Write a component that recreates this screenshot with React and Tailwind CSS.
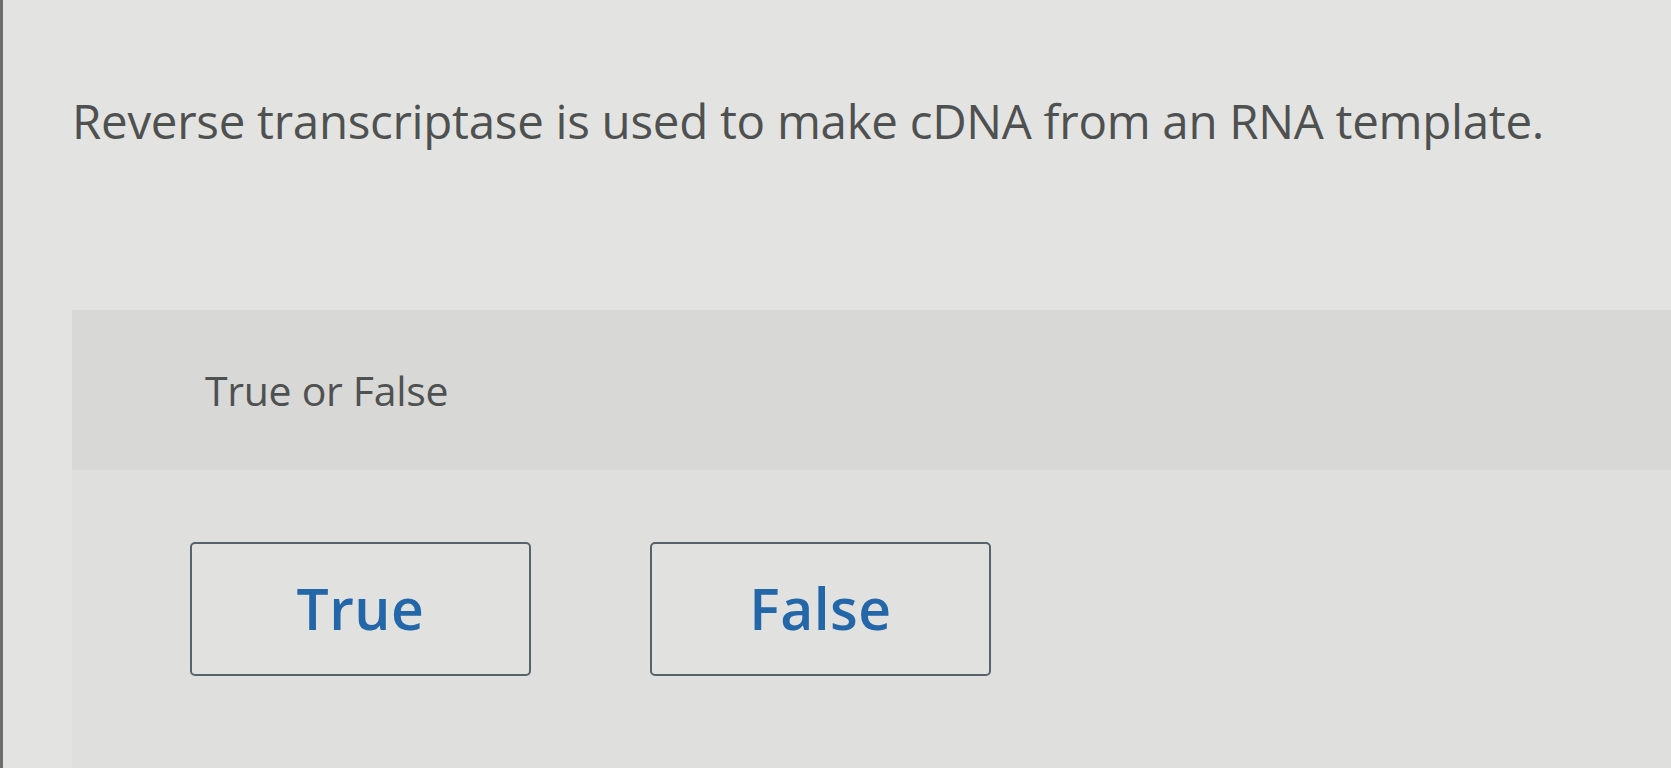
import React from "react";

const choices = ["True", "False"];

function ChoiceButton({ label }) {
  return (
    <button className="w-[341px] h-[134px] rounded-[5px] border-2 border-[#56636c] bg-[#e1e2e0] text-[57px] font-semibold text-[#2467a8] tracking-[0.5px]">
      {label}
    </button>
  );
}

export default function App() {
  return (
    <div
      className="min-h-screen w-full bg-[#e3e4e2] text-[#4f5150] border-l-[3px] border-[#6d6e6c]"
      style={{ fontFamily: '"Open Sans", "Liberation Sans", sans-serif' }}
    >
      <h1 className="pl-[69px] pt-[89px] text-[47.5px] leading-[64px] font-normal tracking-[-0.3px]">
        Reverse transcriptase is used to make cDNA from an RNA template.
      </h1>

      <div className="ml-[69px] mt-[157px] bg-[#dfe0de]">
        {/* prompt header */}
        <div className="h-[160px] bg-[#d8d9d7] pl-[133px] flex items-center">
          <p className="text-[41px] leading-none tracking-[-0.3px]">True or False</p>
        </div>

        {/* answer options */}
        <div className="pl-[118px] pt-[72px] pb-[120px] flex gap-[119px]">
          {choices.map((c) => (
            <ChoiceButton key={c} label={c} />
          ))}
        </div>
      </div>
    </div>
  );
}
